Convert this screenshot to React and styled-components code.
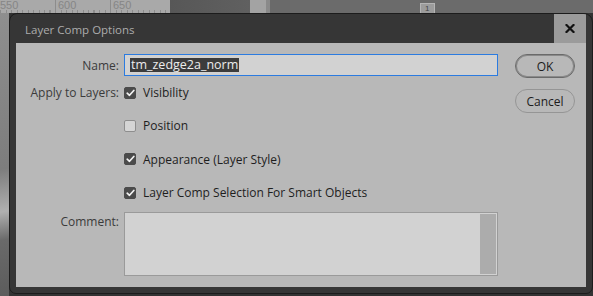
import React from 'react';
import styled, { createGlobalStyle } from 'styled-components';

const GlobalStyle = createGlobalStyle`
  html, body {
    margin: 0;
    padding: 0;
    background: #4a4a4a;
    overflow: hidden;
  }
  body {
    font-family: "Open Sans", "Noto Sans", "Liberation Sans", sans-serif;
  }
`;

const Screen = styled.div`
  width: 593px;
  height: 296px;
  display: flex;
  flex-direction: column;
  background: #3a3a3a;
`;

const TopStrip = styled.div`
  display: flex;
  height: 13px;
  flex-shrink: 0;
`;

const Ruler = styled.div`
  width: 170px;
  background-color: #a9a9a9;
  background-image: repeating-linear-gradient(
    to right,
    #8c8c8c 0,
    #8c8c8c 1px,
    transparent 1px,
    transparent 5.5px
  );
  background-size: 100% 3px;
  background-repeat: repeat-x;
  background-position: 0 100%;
  display: flex;
`;

const RulerMark = styled.div`
  width: 55px;
  flex-shrink: 0;
  border-left: 1px solid #8c8c8c;
  font-family: "Liberation Sans", sans-serif;
  font-size: 11px;
  line-height: 11px;
  color: #868686;
  padding-left: 2px;
  box-sizing: border-box;
  overflow: hidden;
  &:first-child {
    border-left: none;
    padding-left: 0;
  }
`;

const Patch = styled.div`
  width: ${(p) => p.$w}px;
  flex-shrink: ${(p) => (p.$grow ? 1 : 0)};
  flex-grow: ${(p) => (p.$grow ? 1 : 0)};
  background: ${(p) => p.$bg};
  display: flex;
  align-items: flex-end;
`;

const PageBadge = styled.div`
  margin-left: 130px;
  width: 15px;
  height: 10px;
  background: #9c9c9c;
  border: 1px solid #b5b5b5;
  border-bottom: none;
  font-family: "Liberation Sans", sans-serif;
  font-size: 8px;
  line-height: 10px;
  color: #444;
  padding-left: 4px;
  box-sizing: border-box;
`;

const Stage = styled.div`
  display: flex;
  flex: 1;
  background: #333;
`;

const Gutter = styled.div`
  width: 9px;
  flex-shrink: 0;
  background: linear-gradient(
    170deg,
    #8f8f8f 0%,
    #7d7d7d 55%,
    #b0b0b0 70%,
    #6a6a6a 80%,
    #5c5c5c 100%
  );
`;

const Dialog = styled.div`
  width: 584px;
  height: 281px;
  background: #363636;
  border: 1px solid #1c1c1c;
  border-radius: 8px 9px 7px 7px;
  box-sizing: border-box;
  display: flex;
  flex-direction: column;
  overflow: hidden;
`;

const TitleBar = styled.div`
  height: 29px;
  flex-shrink: 0;
  display: flex;
  align-items: center;
  justify-content: space-between;
  padding-left: 15px;
`;

const Title = styled.div`
  font-size: 11.5px;
  color: #acacac;
  padding-top: 1px;
`;

const CloseButton = styled.div`
  width: 32px;
  height: 29px;
  margin-right: 6px;
  background: #9b9b9b;
  display: flex;
  align-items: center;
  justify-content: center;
`;

const Body = styled.div`
  flex: 1;
  margin: 0 6px 6px 6px;
  background: #b8b8b8;
  display: flex;
  padding-top: 11px;
  box-sizing: border-box;
`;

const Form = styled.div`
  display: grid;
  grid-template-columns: 103px 374px;
  column-gap: 5px;
  align-content: start;
`;

const Label = styled.div`
  font-size: 12px;
  color: #3b3b3b;
  text-align: right;
  align-self: ${(p) => p.$align || 'center'};
  padding-top: ${(p) => p.$top || 0}px;
  white-space: nowrap;
`;

const NameField = styled.div`
  height: 22px;
  box-sizing: border-box;
  border: 1px solid #2b7be0;
  background: #d2d2d2;
  display: flex;
  align-items: center;
  padding-left: 5px;
`;

const Selection = styled.span`
  background: #3c3c3c;
  color: #ececec;
  font-size: 12.5px;
  line-height: 14px;
  padding: 0 1px;
`;

const CheckRow = styled.div`
  height: 33.3px;
  display: flex;
  align-items: center;
  gap: 7px;
  font-size: 12px;
  color: #1e1e1e;
`;

const Box = styled.div`
  width: 12px;
  height: 12px;
  box-sizing: border-box;
  border-radius: 2px;
  background: ${(p) => (p.$checked ? '#4b4b4b' : '#d5d5d5')};
  border: 1px solid ${(p) => (p.$checked ? '#4b4b4b' : '#8e8e8e')};
  display: flex;
  align-items: center;
  justify-content: center;
`;

const CommentBox = styled.div`
  margin-top: 3px;
  height: 64px;
  box-sizing: border-box;
  border: 1px solid #9a9a9a;
  background: #d2d2d2;
  display: flex;
  justify-content: flex-end;
  padding: 1px;
`;

const ScrollTrack = styled.div`
  width: 16px;
  background: #acacac;
`;

const Buttons = styled.div`
  display: flex;
  flex-direction: column;
  gap: 11px;
  margin-left: 17px;
`;

const PillButton = styled.div`
  width: 60px;
  height: 24px;
  box-sizing: border-box;
  border-radius: 12px;
  border: 1px solid ${(p) => (p.$primary ? '#6a6a6a' : '#959595')};
  box-shadow: ${(p) =>
    p.$primary ? 'inset 0 0 0 1px #8a8a8a' : 'none'};
  display: flex;
  align-items: center;
  justify-content: center;
  font-size: 12px;
  color: #1c1c1c;
`;

const Check = () => (
  <svg width="9" height="8" viewBox="0 0 9 8">
    <path
      d="M1.2 4.2 L3.5 6.3 L7.8 1.5"
      fill="none"
      stroke="#f2f2f2"
      strokeWidth="1.7"
      strokeLinecap="round"
      strokeLinejoin="round"
    />
  </svg>
);

const CloseIcon = () => (
  <svg width="10" height="9" viewBox="0 0 10 9">
    <path
      d="M1.5 1 L8.5 8 M8.5 1 L1.5 8"
      stroke="#111"
      strokeWidth="2.2"
      strokeLinecap="square"
    />
  </svg>
);

const layers = [
  { label: 'Visibility', checked: true },
  { label: 'Position', checked: false },
  { label: 'Appearance (Layer Style)', checked: true },
  { label: 'Layer Comp Selection For Smart Objects', checked: true },
];

const App = () => (
  <>
    <GlobalStyle />
    <Screen>
      <TopStrip>
        <Ruler>
          <RulerMark>550</RulerMark>
          <RulerMark>600</RulerMark>
          <RulerMark>650</RulerMark>
        </Ruler>
        <Patch $w={80} $bg="linear-gradient(to right, #575757, #606060)" />
        <Patch $w={16} $bg="#a3a3a3" />
        <Patch $w={4} $bg="#8a8a8a" />
        <Patch $w={20} $bg="#6a6a6a" />
        <Patch $grow $bg="#6b6b6b">
          <PageBadge>1</PageBadge>
        </Patch>
      </TopStrip>
      <Stage>
        <Gutter />
        <Dialog>
          <TitleBar>
            <Title>Layer Comp Options</Title>
            <CloseButton>
              <CloseIcon />
            </CloseButton>
          </TitleBar>
          <Body>
            <Form>
              <Label>Name:</Label>
              <NameField>
                <Selection>tm_zedge2a_norm</Selection>
              </NameField>

              <Label $align="start" $top={8}>
                Apply to Layers:
              </Label>
              <div>
                {layers.map((l) => (
                  <CheckRow key={l.label}>
                    <Box $checked={l.checked}>{l.checked && <Check />}</Box>
                    {l.label}
                  </CheckRow>
                ))}
              </div>

              <Label $align="start" $top={4}>
                Comment:
              </Label>
              <CommentBox>
                <ScrollTrack />
              </CommentBox>
            </Form>
            <Buttons>
              <PillButton $primary>OK</PillButton>
              <PillButton>Cancel</PillButton>
            </Buttons>
          </Body>
        </Dialog>
      </Stage>
    </Screen>
  </>
);

export default App;
